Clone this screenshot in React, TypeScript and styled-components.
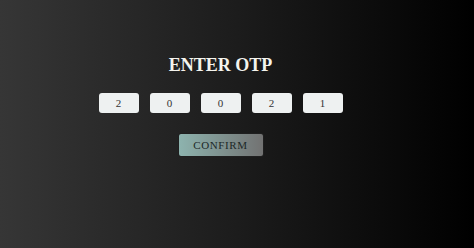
import React from 'react';
import styled, { createGlobalStyle } from 'styled-components';

const GlobalStyle = createGlobalStyle`
  html, body {
    margin: 0;
    padding: 0;
  }
  body {
    font-family: 'Liberation Serif', 'Times New Roman', serif;
  }
`;

/** 整页背景，左灰右黑 */
const Page = styled.div`
  width: 474px;
  height: 248px;
  box-sizing: border-box;
  background: linear-gradient(to right, #363636 0%, #1c1c1c 50%, #000000 100%);
  display: flex;
  flex-direction: column;
  align-items: center;
  padding: 55px 33px 0 0;
`;

const Title = styled.h1`
  margin: 0;
  font-family: 'Liberation Serif', 'Times New Roman', serif;
  font-size: 18px;
  line-height: 21px;
  font-weight: 700;
  color: #f4f4ee;
`;

const OtpRow = styled.div`
  display: flex;
  gap: 11px;
  margin-top: 17px;
`;

const OtpBox = styled.input`
  box-sizing: border-box;
  width: 40px;
  height: 20px;
  padding: 0;
  border: none;
  border-radius: 3px;
  background: #eef1f1;
  color: #333;
  font-family: 'Liberation Serif', 'Times New Roman', serif;
  font-size: 11px;
  text-align: center;
  outline: none;
`;

const ConfirmButton = styled.button`
  box-sizing: border-box;
  width: 86px;
  height: 24px;
  margin-top: 20px;
  padding: 0;
  border: 1px solid #1f1f1f;
  border-radius: 3px;
  background: linear-gradient(to right, #8db3ae, #727272);
  color: #1c2828;
  font-family: 'Liberation Serif', 'Times New Roman', serif;
  font-size: 11px;
  letter-spacing: 0.6px;
  cursor: pointer;
`;

const digits = ['2', '0', '0', '2', '1'];

export default function App() {
  return (
    <>
      <GlobalStyle />
      <Page>
        <Title>ENTER OTP</Title>
        <OtpRow>
          {digits.map((d, i) => (
            <OtpBox key={i} value={d} readOnly maxLength={1} />
          ))}
        </OtpRow>
        <ConfirmButton>CONFIRM</ConfirmButton>
      </Page>
    </>
  );
}
